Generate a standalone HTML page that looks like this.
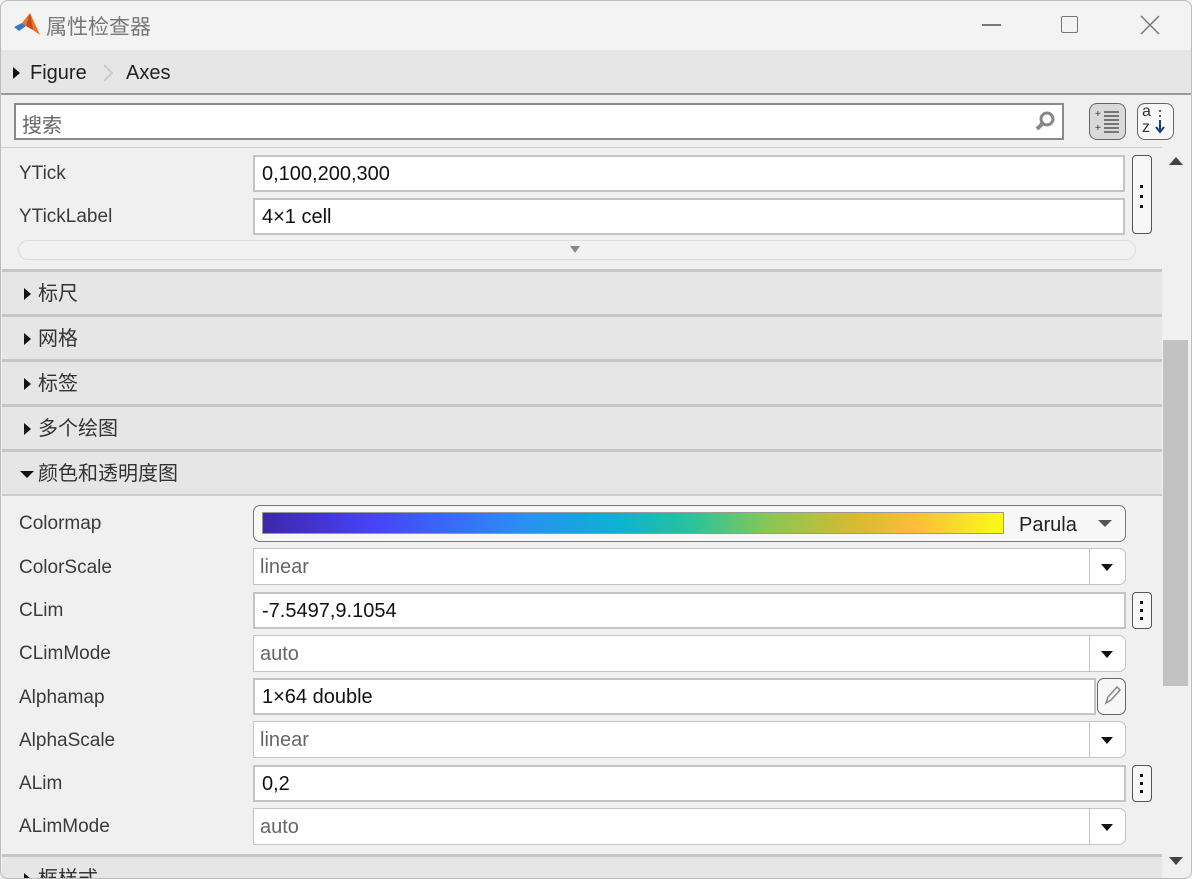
<!DOCTYPE html>
<html style="width:1192px;height:879px;overflow:hidden"><head><meta charset="utf-8"><style>
*{box-sizing:border-box;margin:0;padding:0}
body{width:1192px;height:879px;overflow:hidden;background:#f0f0f0;font-family:"Liberation Sans","Noto Sans CJK SC",sans-serif;color:#333;position:relative}
.a{position:absolute}
.lbl{position:absolute;left:19px;font-size:19px;color:#3a3a3a}
.fld{position:absolute;left:253px;background:#fff;border:2px solid #c4c4c4;height:37px;font-size:20px;padding-left:7px;line-height:35px;color:#111}
.dd{position:absolute;left:253px;width:873px;background:#fff;border:1px solid #c4c4c4;border-radius:0 7px 7px 0;height:37px;font-size:20px;padding-left:6px;line-height:37px;color:#666}
.dd:after{content:"";position:absolute;right:0;top:0;width:35px;height:35px;border-left:1px solid #c4c4c4;background:#fff;border-radius:0 7px 7px 0}
.dd i{position:absolute;right:12px;top:15px;border-left:6px solid transparent;border-right:6px solid transparent;border-top:7px solid #111;z-index:2}
.ell{position:absolute;left:1132px;width:20px;height:37px;border:1.5px solid #555;border-radius:4px;background:#f7f7f7}
.ell b{position:absolute;left:7px;width:3px;height:3px;background:#111}
.hdr{position:absolute;left:2px;width:1160px;height:45px;background:#e6e6e6;border-top:3px solid #c6c6c6;font-size:20px;line-height:44px;padding-left:36px;color:#333;overflow:hidden}
.tri{position:absolute;left:22px;top:16px;border-top:6px solid transparent;border-bottom:6px solid transparent;border-left:7px solid #111}
.trid{position:absolute;left:18px;top:19px;border-left:7px solid transparent;border-right:7px solid transparent;border-top:7px solid #111}
</style></head><body>
<div class="a" style="left:0;top:0;width:1192px;height:879px;border:1px solid #bdbdbd;border-radius:8px;pointer-events:none;z-index:9"></div>
<!-- title -->
<div class="a" style="left:0;top:0;width:1192px;height:50px;background:#f3f3f3"></div>
<svg class="a" style="left:13px;top:12px" width="28" height="26" viewBox="0 0 28 26"><path d="M1 15 L9 11 L13 14 L6 19Z" fill="#3b78c4"/><path d="M9 11 L17 1 L27 23 L20 18 L13 14Z" fill="#e8762b"/><path d="M17 1 L13 14 L20 18 Z" fill="#c44a1a"/></svg>
<div class="a" style="left:46px;top:11px;font-size:21px;color:#777">属性检查器</div>
<div class="a" style="left:982px;top:24px;width:19px;height:1.5px;background:#777"></div>
<div class="a" style="left:1061px;top:16px;width:17px;height:17px;border:1.5px solid #777;border-radius:2px"></div>
<svg class="a" style="left:1140px;top:15px" width="20" height="20"><path d="M1 1L19 19M19 1L1 19" stroke="#777" stroke-width="1.5"/></svg>
<!-- breadcrumb -->
<div class="a" style="left:0;top:50px;width:1192px;height:45px;background:#e6e6e6;border-bottom:2px solid #999"></div>
<div class="a" style="left:13px;top:67px;border-top:6px solid transparent;border-bottom:6px solid transparent;border-left:7px solid #111"></div>
<div class="a" style="left:30px;top:62px;font-size:20px;color:#222">Figure</div>
<svg class="a" style="left:102px;top:63px" width="12" height="20"><path d="M2 2L10 10L2 18" stroke="#ccc" stroke-width="2" fill="none"/></svg>
<div class="a" style="left:126px;top:62px;font-size:20px;color:#222">Axes</div>
<!-- search -->
<div class="a" style="left:14px;top:103px;width:1050px;height:37px;background:#fff;border:2px solid #8a8a8a"></div>
<div class="a" style="left:22px;top:109px;font-size:20px;color:#666">搜索</div>
<svg class="a" style="left:1033px;top:110px" width="24" height="24"><circle cx="14" cy="9" r="6" stroke="#888" stroke-width="3" fill="none"/><path d="M10 13L4 19" stroke="#888" stroke-width="4"/></svg>
<div class="a" style="left:1089px;top:103px;width:37px;height:37px;border:1.5px solid #666;border-radius:8px;background:#d9d9d9"></div>
<svg class="a" style="left:1093px;top:108px" width="30" height="28"><text x="2" y="9" font-size="10" fill="#333">+</text><text x="2" y="23" font-size="10" fill="#333">+</text><path d="M11 4H26M11 8H26M11 12H26M11 16H26M11 20H26M11 24H26" stroke="#555" stroke-width="1.5"/></svg>
<div class="a" style="left:1137px;top:103px;width:37px;height:37px;border:1.5px solid #666;border-radius:8px;background:#f7f7f7"></div>
<div class="a" style="left:1142px;top:104px;font-size:16px;line-height:16px;color:#333">a<br>z</div>
<svg class="a" style="left:1155px;top:108px" width="12" height="28"><circle cx="5" cy="3" r="1" fill="#333"/><circle cx="5" cy="8" r="1" fill="#333"/><path d="M5 12V24M1 19L5 24L9 19" stroke="#1a3f7a" stroke-width="2" fill="none"/></svg>
<div class="a" style="left:0;top:147px;width:1162px;height:1px;background:#ccc"></div>
<!-- scrollbar -->
<div class="a" style="left:1162px;top:148px;width:28px;height:730px;background:#f0f0f0"></div>
<div class="a" style="left:1169px;top:157px;border-left:7px solid transparent;border-right:7px solid transparent;border-bottom:8px solid #444"></div>
<div class="a" style="left:1163px;top:340px;width:25px;height:346px;background:#c2c2c2"></div>
<div class="a" style="left:1169px;top:857px;border-left:7px solid transparent;border-right:7px solid transparent;border-top:8px solid #444"></div>
<!-- top rows -->
<div class="lbl" style="top:163px">YTick</div>
<div class="fld" style="top:155px;width:872px">0,100,200,300</div>
<div class="lbl" style="top:206px">YTickLabel</div>
<div class="fld" style="top:198px;width:872px">4×1 cell</div>
<div class="ell" style="top:155px;height:79px"><b style="top:29px"></b><b style="top:39px"></b><b style="top:49px"></b></div>
<div class="a" style="left:18px;top:240px;width:1118px;height:20px;border:1px solid #ddd;border-radius:10px;background:#f2f2f2"></div>
<div class="a" style="left:570px;top:246px;border-left:5px solid transparent;border-right:5px solid transparent;border-top:7px solid #888"></div>
<!-- headers -->
<div class="hdr" style="top:269px"><span class="tri"></span>标尺</div>
<div class="hdr" style="top:314px"><span class="tri"></span>网格</div>
<div class="hdr" style="top:359px"><span class="tri"></span>标签</div>
<div class="hdr" style="top:404px"><span class="tri"></span>多个绘图</div>
<div class="hdr" style="top:449px;height:47px;border-bottom:2px solid #ccc"><span class="trid"></span>颜色和透明度图</div>
<!-- props -->
<div class="lbl" style="top:513px">Colormap</div>
<div class="a" style="left:253px;top:505px;width:873px;height:37px;border:1.5px solid #777;border-radius:7px;background:#f7f7f7"></div>
<div class="a" style="left:262px;top:512px;width:742px;height:22px;border:1px solid #999;background:linear-gradient(90deg,#3e26a8,#4743f8 15%,#2c8ef4 35%,#0cb2d0 48%,#2bc29a 58%,#86c756 68%,#d7ba33 80%,#fbbd3c 88%,#f9fb15)"></div>
<div class="a" style="left:1019px;top:514px;font-size:20px;color:#222">Parula</div>
<div class="a" style="left:1098px;top:520px;border-left:7px solid transparent;border-right:7px solid transparent;border-top:7px solid #555"></div>

<div class="lbl" style="top:557px">ColorScale</div>
<div class="dd" style="top:548px">linear<i></i></div>
<div class="lbl" style="top:600px">CLim</div>
<div class="fld" style="top:592px;width:873px">-7.5497,9.1054</div>
<div class="ell" style="top:592px"><b style="top:8px"></b><b style="top:16px"></b><b style="top:24px"></b></div>
<div class="lbl" style="top:643px">CLimMode</div>
<div class="dd" style="top:635px">auto<i></i></div>
<div class="lbl" style="top:687px">Alphamap</div>
<div class="fld" style="top:678px;width:843px">1×64 double</div>
<div class="a" style="left:1097px;top:678px;width:29px;height:37px;border:1.5px solid #666;border-radius:7px;background:#f7f7f7"></div>
<svg class="a" style="left:1101px;top:684px" width="22" height="24"><path d="M5 19L7 13L16 3L19 6L10 16Z" stroke="#888" stroke-width="1.5" fill="none"/></svg>
<div class="lbl" style="top:730px">AlphaScale</div>
<div class="dd" style="top:721px">linear<i></i></div>
<div class="lbl" style="top:773px">ALim</div>
<div class="fld" style="top:765px;width:873px">0,2</div>
<div class="ell" style="top:765px"><b style="top:8px"></b><b style="top:16px"></b><b style="top:24px"></b></div>
<div class="lbl" style="top:816px">ALimMode</div>
<div class="dd" style="top:808px">auto<i></i></div>
<div class="hdr" style="top:854px;height:25px"><span class="tri"></span>框样式</div>
</body></html>
